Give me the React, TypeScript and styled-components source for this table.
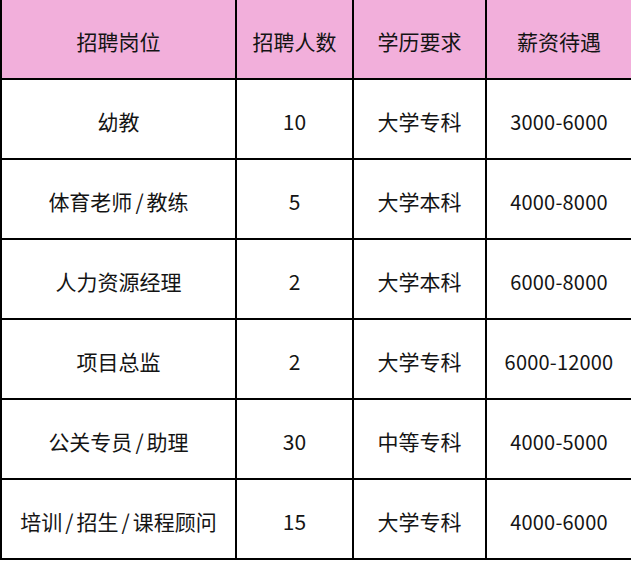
import styled, { createGlobalStyle } from "styled-components";

const GlobalStyle = createGlobalStyle`
	html, body {
		margin: 0;
		padding: 0;
		background: #fff;
	}
	body {
		font-family: "Noto Sans CJK SC", "Noto Sans", sans-serif;
	}
`;

const columns = [
	{ title: "招聘岗位", width: 235 },
	{ title: "招聘人数", width: 117 },
	{ title: "学历要求", width: 133 },
	{ title: "薪资待遇", width: 146 },
];

const rows = [
	["幼教", "10", "大学专科", "3000-6000"],
	["体育老师/教练", "5", "大学本科", "4000-8000"],
	["人力资源经理", "2", "大学本科", "6000-8000"],
	["项目总监", "2", "大学专科", "6000-12000"],
	["公关专员/助理", "30", "中等专科", "4000-5000"],
	["培训/招生/课程顾问", "15", "大学专科", "4000-6000"],
];

const Table = styled.table`
	width: 631px;
	table-layout: fixed;
	border-collapse: collapse;
	color: #141414;
	font-size: 21px;
`;

const HeadCell = styled.th`
	height: 75px;
	padding: 3px 0 0;
	background: #f2afdb;
	border: 2px solid #000;
	border-top: none;
	font-weight: 400;
	text-align: center;
	vertical-align: middle;
`;

const Cell = styled.td`
	height: 75px;
	padding: 3px 0 0;
	border: 2px solid #000;
	text-align: center;
	vertical-align: middle;
`;

const Slash = styled.span`
	margin: 0 3px;
`;

const Salary = styled.span`
	font-size: 20px;
	letter-spacing: 0.2px;
`;

// slashes get a little air, like the source
const renderText = (v: string) => {
	if (/^\d/.test(v) && v.includes("-")) return <Salary>{v}</Salary>;
	return v.split(/(\/)/).map((part, i) =>
		part === "/" ? <Slash key={i}>/</Slash> : part
	);
};

export default function App() {
	return (
		<>
			<GlobalStyle />
			<Table>
				<colgroup>
					{columns.map((c) => (
						<col key={c.title} style={{ width: c.width }} />
					))}
				</colgroup>
				<thead>
					<tr>
						{columns.map((c) => (
							<HeadCell key={c.title}>{c.title}</HeadCell>
						))}
					</tr>
				</thead>
				<tbody>
					{rows.map((r) => (
						<tr key={r[0]}>
							{r.map((v, i) => (
								<Cell key={i}>{renderText(v)}</Cell>
							))}
						</tr>
					))}
				</tbody>
			</Table>
		</>
	);
}
